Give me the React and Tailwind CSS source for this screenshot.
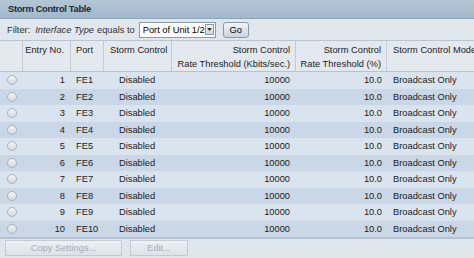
const rows = Array.from({ length: 10 }, (_, i) => ({
  no: i + 1,
  port: `FE${i + 1}`,
  control: 'Disabled',
  kbits: '10000',
  pct: '10.0',
  mode: 'Broadcast Only',
}));

function Radio() {
  return (
    <span className="block w-[10px] h-[10px] rounded-full border border-[#a9b3bd] bg-gradient-to-b from-[#f4f6f8] to-[#d3d9df]" />
  );
}

export default function App() {
  return (
    <div
      className="w-[474px] h-[258px] overflow-hidden bg-[#dfe6ec] text-[9.3px] leading-[14px] text-[#1c1c1c]"
      style={{ fontFamily: '"Liberation Sans", Arial, sans-serif' }}
    >
      {/* title */}
      <div className="h-[19px] flex items-center pl-[8px] font-bold text-[9.3px] tracking-[-0.3px] text-[#1a2a3a] bg-gradient-to-b from-[#b3c6d5] to-[#a3b9cb] border-b border-[#8fa6b9]">
        Storm Control Table
      </div>

      {/* filter */}
      <div className="h-[22px] flex items-center pl-[7px] bg-[#e0e7ed] border-b border-[#b9c4ce] text-[#333]">
        <span>Filter:</span>
        <span className="italic ml-[5px]">Interface Type</span>
        <span className="ml-[3px]">equals to</span>
        <div className="ml-[4px] h-[16px] w-[77px] flex items-center justify-between bg-white border border-[#8e9aa5] pl-[3px] pr-[1px] text-black whitespace-nowrap">
          <span>Port of Unit 1/2</span>
          <span className="w-[11px] h-[11px] flex items-center justify-center bg-gradient-to-b from-[#f5f5f5] to-[#cfd4d9] border border-[#8e9aa5]">
            <svg width="5" height="3" viewBox="0 0 6 4"><path d="M0 0h6L3 4z" fill="#222" /></svg>
          </span>
        </div>
        <div className="ml-[7px] h-[16px] w-[26px] flex items-center justify-center rounded-[3px] border border-[#8d9aa6] bg-gradient-to-b from-[#f2f5f8] to-[#ccd5de] text-black">
          Go
        </div>
      </div>

      {/* header */}
      <div className="h-[31px] flex bg-[#e3e9ef] border-b border-[#b7c2cc] text-[#222] whitespace-nowrap">
        <div className="w-[23px] shrink-0 border-r border-[#c3ccd5]" />
        <div className="w-[48px] shrink-0 border-r border-[#c3ccd5] text-right pr-[6px] pt-[2px]">Entry No.</div>
        <div className="w-[33px] shrink-0 border-r border-[#c3ccd5] pl-[5px] pt-[2px]">Port</div>
        <div className="w-[68px] shrink-0 border-r border-[#c3ccd5] pl-[6px] pt-[2px]">Storm Control</div>
        <div className="w-[124px] shrink-0 border-r border-[#c3ccd5] text-right pr-[5px] pt-[2px]">
          Storm Control
          <br />
          Rate Threshold (Kbits/sec.)
        </div>
        <div className="w-[91px] shrink-0 border-r border-[#c3ccd5] text-right pr-[5px] pt-[2px]">
          Storm Control
          <br />
          Rate Threshold (%)
        </div>
        <div className="w-[100px] shrink-0 pl-[6px] pt-[2px]">Storm Control Mode</div>
      </div>

      {/* rows */}
      <div className="border-b-2 border-[#b5c1cc]">
        {rows.map((r, i) => (
          <div
            key={r.no}
            className={`h-[16.5px] flex items-center whitespace-nowrap ${i % 2 === 0 ? 'bg-[#d9e4ef]' : 'bg-[#c9d7e6]'}`}
          >
            <div className="w-[23px] shrink-0 flex justify-center">
              <Radio />
            </div>
            <div className="w-[48px] shrink-0 text-right pr-[6px]">{r.no}</div>
            <div className="w-[33px] shrink-0 pl-[5px]">{r.port}</div>
            <div className="w-[68px] shrink-0 pl-[15px]">{r.control}</div>
            <div className="w-[124px] shrink-0 text-right pr-[6px]">{r.kbits}</div>
            <div className="w-[91px] shrink-0 text-right pr-[5px]">{r.pct}</div>
            <div className="shrink-0 pl-[6px]">{r.mode}</div>
          </div>
        ))}
      </div>

      {/* buttons */}
      <div className="flex gap-[8px] pl-[5px] pt-[1px]">
        <div className="w-[117px] h-[16px] flex items-center justify-center border border-[#c4ccd3] bg-gradient-to-b from-[#eef1f4] to-[#dce2e8] text-[#a3acb5]">
          Copy Settings...
        </div>
        <div className="w-[58px] h-[16px] flex items-center justify-center border border-[#c4ccd3] bg-gradient-to-b from-[#eef1f4] to-[#dce2e8] text-[#a3acb5]">
          Edit...
        </div>
      </div>
    </div>
  );
}
